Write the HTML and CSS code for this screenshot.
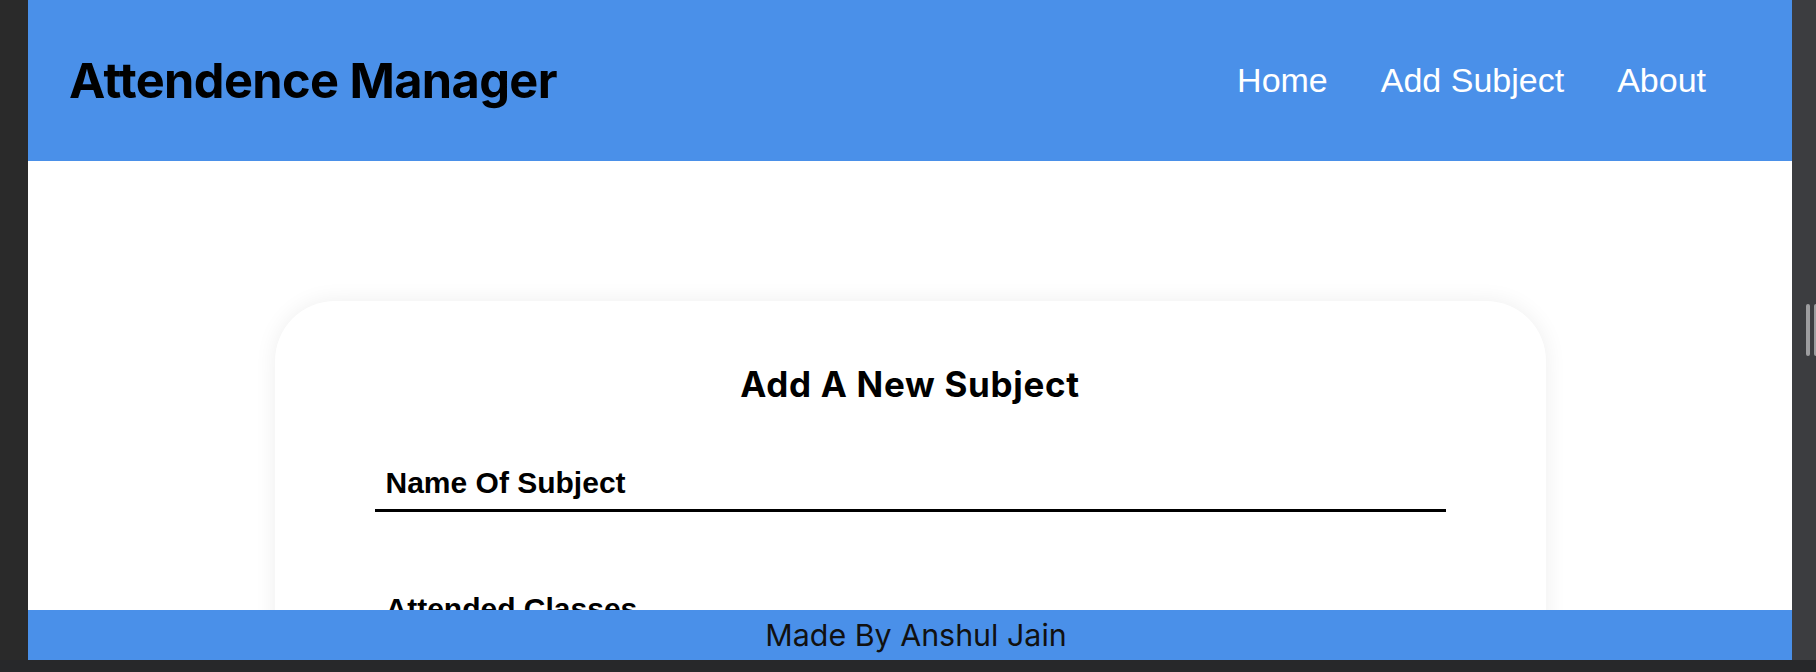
FILE: index.html
```html
<!DOCTYPE html>
<html lang="en">
<head>
<meta charset="utf-8">
<title>Attendence Manager</title>
<link rel="stylesheet" href="styles.css">
</head>
<body>
<div class="screen">
  <div class="side-left"></div>
  <div class="page">
    <header class="topbar">
      <h1 class="brand">Attendence Manager</h1>
      <nav class="nav">
        <a class="nav-link" href="#">Home</a>
        <a class="nav-link" href="#">Add Subject</a>
        <a class="nav-link" href="#">About</a>
      </nav>
    </header>
    <main class="content">
      <section class="card">
        <h2 class="card-title">Add A New Subject</h2>
        <div class="field"><span class="field-label">Name Of Subject</span></div>
        <div class="field"><span class="field-label">Attended Classes</span></div>
        <div class="field"><span class="field-label">Total Classes</span></div>
      </section>
    </main>
    <footer class="footer">Made By Anshul Jain</footer>
  </div>
  <div class="side-right"><span class="grip"></span><span class="grip"></span></div>
  <div class="bottom-strip"></div>
</div>
</body>
</html>
```

FILE: styles.css
```css
* { box-sizing: border-box; }
html, body { margin: 0; padding: 0; }
body { background: #27282a; width: 1816px; height: 672px; overflow: hidden; }

.screen {
  display: grid;
  grid-template-columns: 28px 1764px 24px;
  grid-template-rows: 660px 12px;
  width: 1816px;
  height: 672px;
}
.side-left { background: #2a2a2a; }
.side-right {
  background: #3c3d40;
  display: flex;
  gap: 4px;
  padding: 304px 0 0 14px;
  align-items: flex-start;
}
.grip { display: block; width: 4px; height: 52px; background: #9d9d9f; border-radius: 2px; flex: none; }
.bottom-strip { grid-column: 1 / 4; background: #27282a; }

.page {
  background: #ffffff;
  display: flex;
  flex-direction: column;
  overflow: hidden;
}

.topbar {
  flex: none;
  height: 161px;
  background: #4a90e9;
  display: flex;
  align-items: center;
  justify-content: space-between;
  padding: 0 86px 0 41px;
}
.brand {
  margin: 0;
  font-family: "Inter", "Liberation Sans", sans-serif;
  font-weight: 700;
  font-size: 48.7px;
  letter-spacing: -0.6px;
  color: #000;
  line-height: 57px;
}
.nav { display: flex; gap: 53px; align-items: center; margin-bottom: 2px; }
.nav-link {
  font-family: "Liberation Sans", Arial, sans-serif;
  font-size: 34px;
  color: #ffffff;
  text-decoration: none;
  line-height: 38px;
}

.content {
  flex: 1;
  overflow: hidden;
  padding-top: 140px;
  min-height: 0;
}
.card {
  width: 1271px;
  margin: 0 auto;
  min-height: 600px;
  background: #fff;
  border-radius: 60px;
  box-shadow: 0 0 22px rgba(0, 0, 0, 0.07);
  padding: 63px 100px 40px;
}
.card-title {
  margin: 0 0 52px;
  text-align: center;
  font-family: "Inter", "Liberation Sans", sans-serif;
  font-weight: 700;
  font-size: 35px;
  letter-spacing: 0.7px;
  line-height: 40px;
  color: #000;
}
.field {
  border-bottom: 3px solid #000;
  padding: 10px 11px 10px;
  margin-bottom: 70px;
}
.field-label {
  font-family: "Liberation Sans", Arial, sans-serif;
  font-weight: 700;
  font-size: 30px;
  color: #000;
  line-height: 33px;
  display: block;
}

.footer {
  flex: none;
  height: 50px;
  background: #4a90e9;
  display: flex;
  align-items: center;
  justify-content: center;
  font-family: "Inter", "Liberation Sans", sans-serif;
  font-size: 30.4px;
  color: #111;
  padding-left: 12px;
}
```
